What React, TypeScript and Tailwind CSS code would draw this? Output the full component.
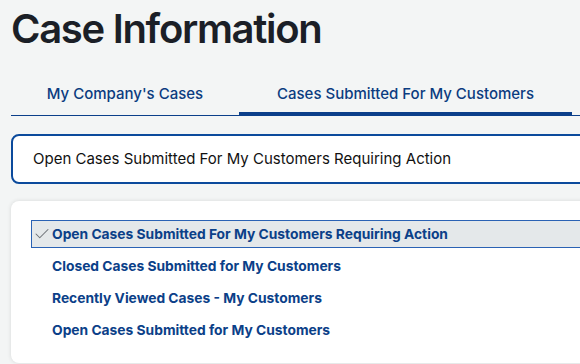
import { Check } from "lucide-react";

const views = [
  "Open Cases Submitted For My Customers Requiring Action",
  "Closed Cases Submitted for My Customers",
  "Recently Viewed Cases - My Customers",
  "Open Cases Submitted for My Customers",
];

export default function App() {
  const selected = 0;

  return (
    <div className="w-[580px] h-[364px] overflow-hidden bg-[#f3f5f5] font-['Inter',sans-serif]">
      <h1 className="pl-[11px] pt-[5px] text-[40px] leading-[48px] font-semibold tracking-[-1.3px] text-[#1b1f27]">
        Case Information
      </h1>

      <div className="ml-[11px] mt-[25px] w-[600px] flex border-b border-[#0b3f8a]">
        <button className="w-[228px] h-[37px] pb-[1px] flex items-center justify-center text-[15px] font-medium text-[#0b3c80] border-b-[3px] border-transparent">
          My Company's Cases
        </button>
        <button className="w-[333px] h-[37px] pb-[1px] flex items-center justify-center text-[15px] font-medium text-[#0b3c80] border-b-[3px] border-[#0b3f8a]">
          Cases Submitted For My Customers
        </button>
      </div>

      <div className="ml-[11px] mt-[18px] w-[600px] h-[50px] flex items-center pl-[20px] bg-white border-2 border-[#0b4a9c] rounded-lg text-[15px] text-[#111]">
        Open Cases Submitted For My Customers Requiring Action
      </div>

      <div className="ml-[11px] mt-[17px] w-[600px] h-[162px] bg-white rounded-lg shadow-[0_0_4px_rgba(0,0,0,0.12)] pt-[19px] pl-[20px]">
        {views.map((v, i) => (
          <div
            key={v}
            className={
              i === selected
                ? "h-[28px] mb-[4px] flex items-center bg-[#e4e8ea] border border-[#2a62b4]"
                : "h-[28px] mb-[4px] flex items-center border border-transparent"
            }
          >
            <span className="w-[20px] flex justify-center">
              {i === selected && <Check className="w-[18px] h-[18px] text-[#6b6f75]" strokeWidth={1.4} />}
            </span>
            <span className="text-[13.8px] font-bold text-[#0b4088]">{v}</span>
          </div>
        ))}
      </div>
    </div>
  );
}
